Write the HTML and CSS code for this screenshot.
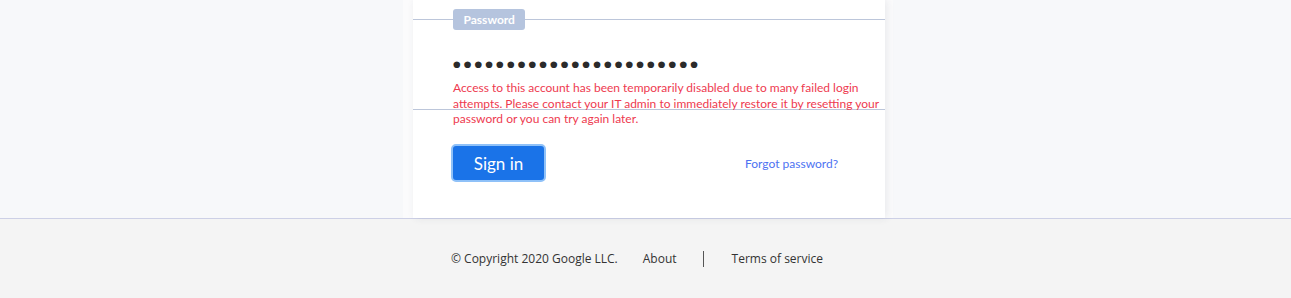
FILE: index.html
```html
<!DOCTYPE html>
<html lang="en">
<head>
<meta charset="utf-8">
<title>Sign in</title>
<link rel="stylesheet" href="styles.css">
</head>
<body>
<main class="top">
  <div class="wrap">
    <div class="card">
      <div class="field">
        <span class="legend">Password</span>
        <div class="dots">●●●●●●●●●●●●●●●●●●●●●●●</div>
        <p class="error">Access to this account has been temporarily disabled due to many failed login attempts. Please contact your IT admin to immediately restore it by resetting your password or you can try again later.</p>
      </div>
      <div class="actions">
        <button class="btn" type="button">Sign in</button>
        <a class="forgot" href="#">Forgot password?</a>
      </div>
    </div>
  </div>
</main>
<footer class="footer">
  <span class="copy">© Copyright 2020 Google LLC.</span>
  <a class="flink" href="#">About</a>
  <span class="sep"></span>
  <a class="flink" href="#">Terms of service</a>
</footer>
</body>
</html>
```
FILE: styles.css
```css
html, body {
  margin: 0;
  padding: 0;
}
body {
  background: #f7f8fa;
  font-family: Lato, "Noto Sans", sans-serif;
  width: 1291px;
  height: 298px;
  overflow: hidden;
}
.top {
  height: 218px;
  display: flex;
  justify-content: center;
}
.wrap {
  width: 470px;
  margin-left: 5px;
  padding: 0 10px;
  background: #fbfbfc;
  display: flex;
}
.card {
  flex: 1;
  background: #fff;
  box-shadow: 2px 0 8px rgba(40, 50, 80, 0.09);
  padding-top: 19px;
}
.field {
  position: relative;
  height: 89px;
  border-top: 1px solid #bcc6da;
  border-bottom: 1px solid #bcc6da;
  padding: 0 0 0 40px;
}
.legend {
  position: absolute;
  left: 40px;
  top: -11px;
  height: 21px;
  line-height: 21px;
  padding: 0 10.5px;
  background: #b5c4de;
  color: #fff;
  font-weight: 700;
  font-size: 12px;
  border-radius: 3px;
}
.dots {
  margin-top: 38px;
  font-family: "DejaVu Sans", sans-serif;
  font-size: 8.7px;
  letter-spacing: 3.2px;
  color: #2b2b2b;
  line-height: 12px;
  height: 12px;
}
.error {
  margin: 10px 0 0;
  width: 432px;
  color: #ee3a4f;
  font-size: 12px;
  line-height: 15.5px;
}
.actions {
  display: flex;
  align-items: center;
  justify-content: space-between;
  padding: 34px 47px 0 38px;
}
.btn {
  width: 95px;
  height: 38px;
  background: #1a73e8;
  border: 2px solid #8fc1f8;
  border-radius: 5px;
  color: #fff;
  font-family: Lato, "Noto Sans", sans-serif;
  font-size: 17px;
  padding: 0;
}
.forgot {
  color: #4d72f2;
  font-size: 12px;
  text-decoration: none;
}
.footer {
  height: 80px;
  border-top: 1px solid #cdd0e6;
  background: #f4f4f4;
  display: flex;
  justify-content: center;
  align-items: center;
  padding: 0 17px 0 0;
  box-sizing: border-box;
  font-family: "Open Sans", "Noto Sans", sans-serif;
  font-size: 12px;
  color: #333;
}
.copy {
  margin-right: 25px;
}
.flink {
  color: #333;
  text-decoration: none;
}
.sep {
  width: 1px;
  height: 16px;
  background: #555;
  margin: 0 28px 0 26px;
}
```
